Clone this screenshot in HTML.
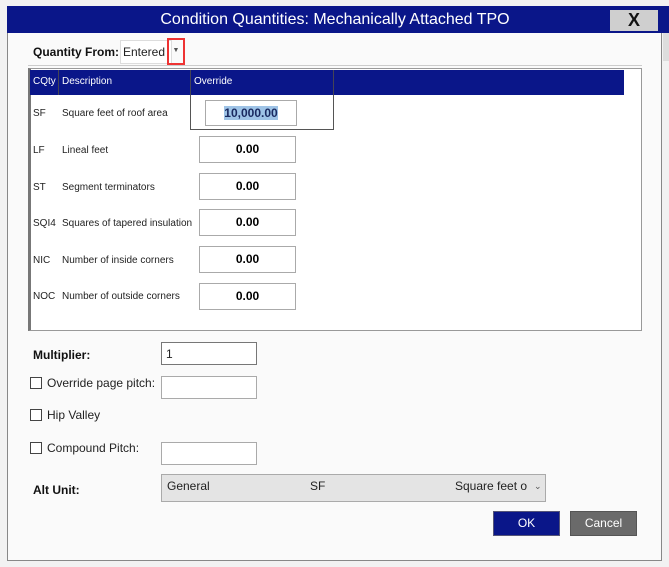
<!DOCTYPE html>
<html><head><style>
body{margin:0;width:669px;height:567px;background:#f2f2f2;position:relative;overflow:hidden;font-family:"Liberation Sans",sans-serif;}
.a{position:absolute}
.dlg{left:7px;top:6px;width:655px;height:555px;background:#fafafa;border:1px solid #888;box-sizing:border-box}
.tb{left:7px;top:6px;width:656px;height:27px;background:#0a1689;color:#fff;font-size:16px;text-align:center;line-height:28px}
.x{left:610px;top:10px;width:48px;height:21px;background:#cfcfcf;font-weight:bold;font-size:18px;text-align:center;line-height:21px;color:#111}
.s{font-size:10px;color:#222}
.in{background:#fff;border:1px solid #aaa;box-sizing:border-box;font-weight:bold;font-size:12px;text-align:center;line-height:24px}
.b{font-size:12px;font-weight:bold;color:#111}
.n{font-size:12px;color:#222}
.cb{width:12px;height:12px;border:1px solid #444;background:#fff;box-sizing:border-box}
.tx{background:#fff;border:1px solid #aaa;box-sizing:border-box;width:96px;height:23px}
</style></head><body>
<div class="a" style="left:663px;top:6px;width:6px;height:27px;background:#0a1689"></div>
<div class="a" style="left:663px;top:33px;width:6px;height:28px;background:#ddd"></div>
<div class="a dlg"></div>
<div class="a tb">Condition Quantities: Mechanically Attached TPO</div>
<div class="a x">X</div>
<div class="a b" style="left:33px;top:45px">Quantity From:</div>
<div class="a" style="left:120px;top:40px;width:50px;height:22px;background:#fff;border:1px solid #ddd"></div>
<div class="a n" style="left:123px;top:45px">Entered</div>
<div class="a" style="left:167px;top:38px;width:18px;height:27px;border:2px solid #e33;box-sizing:border-box;font-size:7px;color:#555;text-align:center;line-height:22px">▼</div>
<div class="a" style="left:28px;top:65px;width:614px;height:1px;background:#ccc"></div>
<div class="a" style="left:28px;top:68px;width:614px;height:263px;background:#fff;border:1px solid #999;border-left:3px solid #777;box-sizing:border-box"></div>
<div class="a" style="left:30px;top:70px;width:594px;height:25px;background:#0a1689"></div>
<div class="a" style="left:58px;top:70px;width:1px;height:25px;background:#445"></div>
<div class="a" style="left:190px;top:70px;width:1px;height:60px;background:#445"></div>
<div class="a" style="left:333px;top:70px;width:1px;height:60px;background:#445"></div>
<div class="a" style="left:190px;top:95px;width:144px;height:35px;border:1px solid #555;border-top:none;box-sizing:border-box"></div>
<div class="a s" style="left:33px;top:76px;color:#fff">CQty</div>
<div class="a s" style="left:62px;top:76px;color:#fff">Description</div>
<div class="a s" style="left:194px;top:76px;color:#fff">Override</div>
<div class="a s" style="left:33px;top:108px">SF</div><div class="a s" style="left:62px;top:108px">Square feet of roof area</div>
<div class="a in" style="left:205px;top:100px;width:92px;height:26px"><span style="background:#9ec3e6;color:#1a2a60">10,000.00</span></div>
<div class="a s" style="left:33px;top:145px">LF</div><div class="a s" style="left:62px;top:145px">Lineal feet</div>
<div class="a in" style="left:199px;top:136px;width:97px;height:27px">0.00</div>
<div class="a s" style="left:33px;top:182px">ST</div><div class="a s" style="left:62px;top:182px">Segment terminators</div>
<div class="a in" style="left:199px;top:173px;width:97px;height:27px">0.00</div>
<div class="a s" style="left:33px;top:218px">SQI4</div><div class="a s" style="left:62px;top:218px">Squares of tapered insulation</div>
<div class="a in" style="left:199px;top:209px;width:97px;height:27px">0.00</div>
<div class="a s" style="left:33px;top:255px">NIC</div><div class="a s" style="left:62px;top:255px">Number of inside corners</div>
<div class="a in" style="left:199px;top:246px;width:97px;height:27px">0.00</div>
<div class="a s" style="left:33px;top:291px">NOC</div><div class="a s" style="left:62px;top:291px">Number of outside corners</div>
<div class="a in" style="left:199px;top:283px;width:97px;height:27px">0.00</div>
<div class="a b" style="left:33px;top:348px">Multiplier:</div>
<div class="a tx" style="left:161px;top:342px;border-color:#777"><span class="n" style="position:absolute;left:4px;top:4px">1</span></div>
<div class="a cb" style="left:30px;top:377px"></div><div class="a n" style="left:47px;top:376px">Override page pitch:</div>
<div class="a tx" style="left:161px;top:376px"></div>
<div class="a cb" style="left:30px;top:409px"></div><div class="a n" style="left:47px;top:408px">Hip Valley</div>
<div class="a cb" style="left:30px;top:442px"></div><div class="a n" style="left:47px;top:441px">Compound Pitch:</div>
<div class="a tx" style="left:161px;top:442px"></div>
<div class="a b" style="left:33px;top:483px">Alt Unit:</div>
<div class="a" style="left:161px;top:474px;width:385px;height:28px;background:#e4e4e4;border:1px solid #aaa;box-sizing:border-box"></div>
<div class="a n" style="left:167px;top:479px">General</div>
<div class="a n" style="left:310px;top:479px">SF</div>
<div class="a n" style="left:455px;top:479px">Square feet o</div>
<div class="a" style="left:534px;top:481px;font-size:9px;color:#555">⌄</div>
<div class="a" style="left:493px;top:511px;width:67px;height:25px;background:#0a1689;border:1px solid #557;box-sizing:border-box;color:#fff;font-size:12px;text-align:center;line-height:23px">OK</div>
<div class="a" style="left:570px;top:511px;width:67px;height:25px;background:#6a6a6a;border:1px solid #555;box-sizing:border-box;color:#fff;font-size:12px;text-align:center;line-height:23px">Cancel</div>
</body></html>
